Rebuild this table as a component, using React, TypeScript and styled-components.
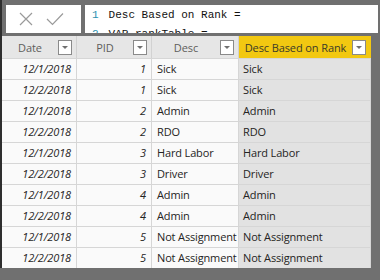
import React from 'react'
import styled, { createGlobalStyle } from 'styled-components'

const GlobalStyle = createGlobalStyle`
  html, body {
    margin: 0;
    padding: 0;
    background: #707070;
  }
`

const Page = styled.div`
  width: 380px;
  height: 280px;
  background: #707070;
  overflow: hidden;
  font-family: "Open Sans", "Noto Sans", sans-serif;
`

const Panel = styled.div`
  width: 378px;
  height: 268px;
  border-left: 2px solid #2e2e2e;
  padding-top: 5px;
  box-sizing: border-box;
`

const FormulaBar = styled.div`
  display: flex;
  gap: 4px;
  height: 28px;
  margin-left: 4px;
`

const ActionBox = styled.div`
  width: 75px;
  background: #ffffff;
  display: flex;
  align-items: center;
  justify-content: center;
  gap: 13px;
  padding-right: 4px;
  box-sizing: border-box;
`

const Editor = styled.div`
  flex: 1;
  background: #ffffff;
  overflow: hidden;
  padding: 1px 0 0 7px;
  box-sizing: border-box;
  font-family: "Liberation Mono", "DejaVu Sans Mono", monospace;
  font-size: 11px;
  line-height: 19px;
  color: #111;
`

const CodeLine = styled.div`
  white-space: pre;
`

const LineNo = styled.span`
  color: #2b91af;
  margin-right: 10px;
`

const Table = styled.div`
  margin-top: 3px;
  width: 369px;
  display: grid;
  grid-template-columns: 75px 75px 87px 132px;
`

const HeadCell = styled.div<{ $active?: boolean }>`
  height: 22px;
  display: flex;
  align-items: center;
  background: ${p => (p.$active ? '#f2c811' : '#e6e6e6')};
  border-right: 1px solid ${p => (p.$active ? '#f2c811' : '#d2d2d2')};
  box-sizing: border-box;
  font-size: 11px;
  letter-spacing: -0.1px;
  color: ${p => (p.$active ? '#3a3a2a' : '#605e5c')};
`

const HeadLabel = styled.span`
  flex: 1;
  text-align: center;
  white-space: nowrap;
`

const Dropdown = styled.span`
  width: 14px;
  height: 15px;
  margin-right: 4px;
  background: #ffffff;
  border: 1px solid #8a8a8a;
  box-sizing: border-box;
  display: flex;
  align-items: center;
  justify-content: center;
  flex-shrink: 0;

  &::after {
    content: '';
    border-left: 3px solid transparent;
    border-right: 3px solid transparent;
    border-top: 3px solid #707070;
  }
`

const Cell = styled.div<{ $align?: 'left' | 'right'; $italic?: boolean; $shade?: boolean }>`
  height: 21px;
  box-sizing: border-box;
  border-right: 1px solid #d6d6d6;
  border-top: 1px solid #d6d6d6;
  background: ${p => (p.$shade ? '#e2e2e2' : '#fafafa')};
  text-align: ${p => p.$align || 'left'};
  font-style: ${p => (p.$italic ? 'italic' : 'normal')};
  padding: 0 5px 0 ${p => (p.$shade ? 4 : 5)}px;
  font-size: 11px;
  letter-spacing: -0.15px;
  line-height: 20px;
  color: #252423;
  white-space: nowrap;
  overflow: hidden;
`

const rows = [
  ['12/1/2018', '1', 'Sick'],
  ['12/2/2018', '1', 'Sick'],
  ['12/1/2018', '2', 'Admin'],
  ['12/2/2018', '2', 'RDO'],
  ['12/1/2018', '3', 'Hard Labor'],
  ['12/2/2018', '3', 'Driver'],
  ['12/1/2018', '4', 'Admin'],
  ['12/2/2018', '4', 'Admin'],
  ['12/1/2018', '5', 'Not Assignment'],
  ['12/2/2018', '5', 'Not Assignment'],
]

const headers = ['Date', 'PID', 'Desc', 'Desc Based on Rank']

const App = () => {
  return (
    <Page>
      <GlobalStyle />
      <Panel>
        <FormulaBar>
          <ActionBox>
            <svg width="14" height="14" viewBox="0 0 14 14">
              <path d="M1 1 L13 13 M13 1 L1 13" stroke="#9a9a9a" strokeWidth="1.2" fill="none" />
            </svg>
            <svg width="18" height="14" viewBox="0 0 18 14">
              <path d="M1 7 L6.5 12.5 L17 1.5" stroke="#9a9a9a" strokeWidth="1.2" fill="none" />
            </svg>
          </ActionBox>
          <Editor>
            <CodeLine><LineNo>1</LineNo>Desc Based on Rank =</CodeLine>
            <CodeLine><LineNo>2</LineNo>VAR rankTable =</CodeLine>
          </Editor>
        </FormulaBar>
        <Table>
          {headers.map((h, i) => (
            <HeadCell key={h} $active={i === 3}>
              <HeadLabel>{h}</HeadLabel>
              <Dropdown />
            </HeadCell>
          ))}
          {rows.map((r, i) => (
            <React.Fragment key={i}>
              <Cell $align="right" $italic>{r[0]}</Cell>
              <Cell $align="right" $italic>{r[1]}</Cell>
              <Cell>{r[2]}</Cell>
              <Cell $shade>{r[2]}</Cell>
            </React.Fragment>
          ))}
        </Table>
      </Panel>
    </Page>
  )
}

export default App
